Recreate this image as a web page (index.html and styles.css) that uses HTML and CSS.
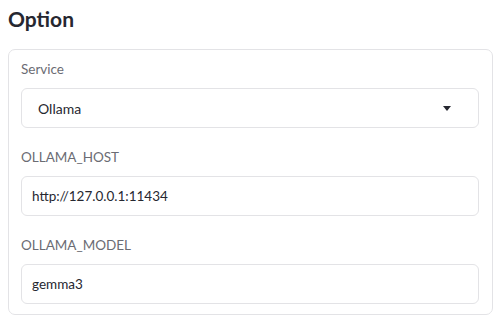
FILE: index.html
```html
<!DOCTYPE html>
<html lang="en">
<head>
    <meta charset="UTF-8">
    <meta name="viewport" content="width=device-width, initial-scale=1.0">
    <title>Option</title>
    <link rel="stylesheet" href="styles.css">
</head>
<body>
    <h2 class="title">Option</h2>

    <div class="card">
        <div class="field">
            <label class="label">Service</label>
            <div class="select">
                <span>Ollama</span>
                <span class="arrow"></span>
            </div>
        </div>

        <div class="field">
            <label class="label">OLLAMA_HOST</label>
            <input class="input" type="text" value="http://127.0.0.1:11434">
        </div>

        <div class="field">
            <label class="label">OLLAMA_MODEL</label>
            <input class="input" type="text" value="gemma3">
        </div>
    </div>
</body>
</html>
```

FILE: styles.css
```css
body {
    margin: 0;
    padding: 0 3px 0 8px;
    font-family: Lato, "Open Sans", sans-serif;
    color: #262730;
    background: #fff;
}
.title {
    margin: 0;
    padding-top: 6px;
    height: 43px;
    font-size: 21px;
    font-weight: 700;
    color: #262730;
}
.card {
    border: 1px solid #e3e3e6;
    border-radius: 7px;
    padding: 4px 13px 10px 12px;
}
.field {
    display: flex;
    flex-direction: column;
}
.label {
    font-size: 13.5px;
    color: #6b6c73;
    height: 34px;
    line-height: 30px;
}
.select, .input {
    box-sizing: border-box;
    height: 40px;
    border: 1px solid #e3e3e6;
    border-radius: 6px;
    font-family: inherit;
    font-size: 14px;
    color: #262730;
    background: #fff;
    margin-bottom: 14px;
}
.field:last-child .input {
    margin-bottom: 0;
}
.select {
    display: flex;
    align-items: center;
    justify-content: space-between;
    padding: 0 27px 0 16px;
}
.arrow {
    width: 0;
    height: 0;
    border-left: 4px solid transparent;
    border-right: 4px solid transparent;
    border-top: 5px solid #262730;
}
.input {
    width: 100%;
    padding: 0 10px;
    font-size: 13.5px;
    outline: none;
}
```
